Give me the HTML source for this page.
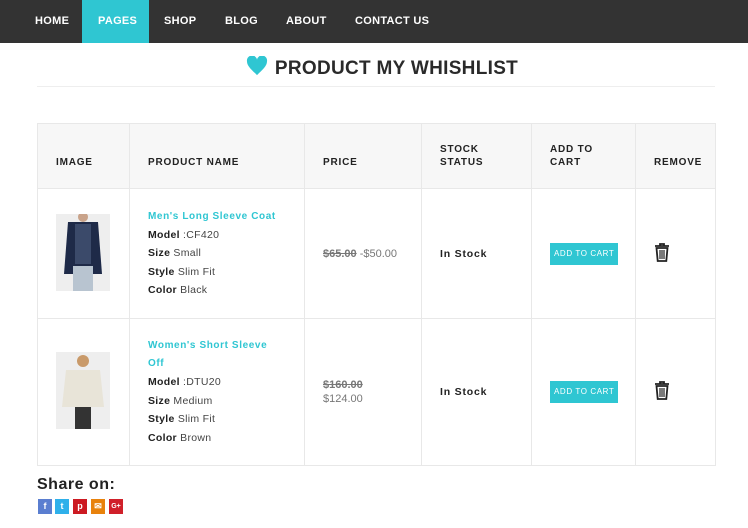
<!DOCTYPE html>
<html><head><meta charset="utf-8"><style>
*{margin:0;padding:0;box-sizing:border-box}
body{width:748px;height:528px;overflow:hidden;background:#fff;font-family:"Liberation Sans",sans-serif;color:#333;position:relative}
.nav{height:43px;background:#333;position:relative}
.nav a{position:absolute;top:0;height:43px;line-height:42px;color:#fff;font-weight:bold;font-size:11px;letter-spacing:.3px;text-decoration:none}
.title{position:absolute;top:56px;left:8px;width:748px;text-align:center;font-size:19px;font-weight:bold;color:#2a2a2a;letter-spacing:.3px}
.hr{position:absolute;top:86px;left:37px;width:678px;height:1px;background:#eee}
table{position:absolute;left:37px;top:123px;width:679px;border-collapse:collapse}
td,th{border:1px solid #e8e8e8;vertical-align:middle;text-align:left;font-size:10px}
th{background:#f7f7f7;height:65px;font-weight:bold;letter-spacing:.8px;color:#222;padding-left:18px;line-height:13px;vertical-align:bottom;padding-bottom:19px}
td{padding-left:18px;font-size:10px;color:#444}
.name{color:#2fc6d2;font-weight:bold;font-size:10px;letter-spacing:.6px;line-height:18px}
.info{line-height:18.5px;font-size:10.5px;letter-spacing:.3px}
.info b{color:#222}
.btn{display:inline-block;background:#2fc6d2;color:#fff;font-size:8px;letter-spacing:.6px;padding:0 4px;height:22px;line-height:22px}
.share{position:absolute;left:37px;top:476px;font-size:16px;font-weight:bold;color:#222;letter-spacing:.5px}
.soc{position:absolute;top:499px;width:14px;height:15px;color:#fff;font-size:9px;font-weight:bold;text-align:center;line-height:15px}
.price{color:#777;font-size:11px;line-height:14px}
.stock{font-weight:bold;color:#222;letter-spacing:.8px;font-size:10.5px}
</style></head><body>
<div class="nav">
<a style="left:35px">HOME</a>
<div style="position:absolute;left:82px;top:0;width:67px;height:43px;background:#2fc6d2"></div>
<a style="left:98px">PAGES</a>
<a style="left:164px">SHOP</a>
<a style="left:225px">BLOG</a>
<a style="left:286px">ABOUT</a>
<a style="left:355px">CONTACT US</a>
</div>
<div class="title"><svg width="22" height="20" viewBox="0 0 24 22" style="vertical-align:-2px;margin-right:7px"><path d="M12 21 C6 15 1 11 1 6 A5.5 5.5 0 0 1 12 4 A5.5 5.5 0 0 1 23 6 C23 11 18 15 12 21Z" fill="#2fc6d2"/></svg>PRODUCT MY WHISHLIST</div>
<div class="hr"></div>
<table>
<tr><th style="width:92px">IMAGE</th><th style="width:175px">PRODUCT NAME</th><th style="width:117px">PRICE</th><th style="width:110px">STOCK<br>STATUS</th><th style="width:104px">ADD TO<br>CART</th><th>REMOVE</th></tr>
<tr style="height:130px"><td><svg width="54" height="77" viewBox="0 0 54 77"><rect width="54" height="77" fill="#eee"/><circle cx="27" cy="3" r="5" fill="#c9a38a"/><path d="M12 8 L42 8 L46 60 L8 60Z" fill="#1e2a48"/><rect x="19" y="10" width="16" height="40" fill="#3b4a6a"/><rect x="17" y="52" width="20" height="25" fill="#b8c4d0"/></svg></td>
<td><div class="name">Men's Long Sleeve Coat</div><div class="info"><b>Model</b> :CF420<br><b>Size</b> Small<br><b>Style</b> Slim Fit<br><b>Color</b> Black</div></td>
<td class="price"><s style="font-weight:bold">$65.00</s> -$50.00</td>
<td class="stock">In Stock</td>
<td><span class="btn">ADD TO CART</span></td>
<td><svg width="16" height="19" viewBox="0 0 16 19"><path d="M1 3h14M6 3V1h4v2M2.5 5l1.2 13h8.6L13.5 5Z" fill="none" stroke="#222" stroke-width="1.8"/><path d="M6 7v9M8 7v9M10 7v9" stroke="#222" stroke-width="1.2"/></svg></td></tr>
<tr style="height:147px"><td><svg width="54" height="77" viewBox="0 0 54 77"><rect width="54" height="77" fill="#eee"/><circle cx="27" cy="9" r="6" fill="#c99a6a"/><path d="M10 18 L44 18 L48 55 L6 55Z" fill="#e8e4d8"/><rect x="19" y="55" width="16" height="22" fill="#333"/></svg></td>
<td><div class="name">Women's Short Sleeve<br>Off</div><div class="info"><b>Model</b> :DTU20<br><b>Size</b> Medium<br><b>Style</b> Slim Fit<br><b>Color</b> Brown</div></td>
<td class="price"><s style="font-weight:bold">$160.00</s><br>$124.00</td>
<td class="stock">In Stock</td>
<td><span class="btn">ADD TO CART</span></td>
<td><svg width="16" height="19" viewBox="0 0 16 19"><path d="M1 3h14M6 3V1h4v2M2.5 5l1.2 13h8.6L13.5 5Z" fill="none" stroke="#222" stroke-width="1.8"/><path d="M6 7v9M8 7v9M10 7v9" stroke="#222" stroke-width="1.2"/></svg></td></tr>
</table>
<div class="share">Share on:</div>
<div class="soc" style="left:38px;background:#5a7ed0">f</div>
<div class="soc" style="left:55px;background:#2fb0ea">t</div>
<div class="soc" style="left:73px;background:#cc1a22">p</div>
<div class="soc" style="left:91px;background:#e8820c">✉</div>
<div class="soc" style="left:109px;background:#d0202a;font-size:7px">G+</div>
</body></html>
